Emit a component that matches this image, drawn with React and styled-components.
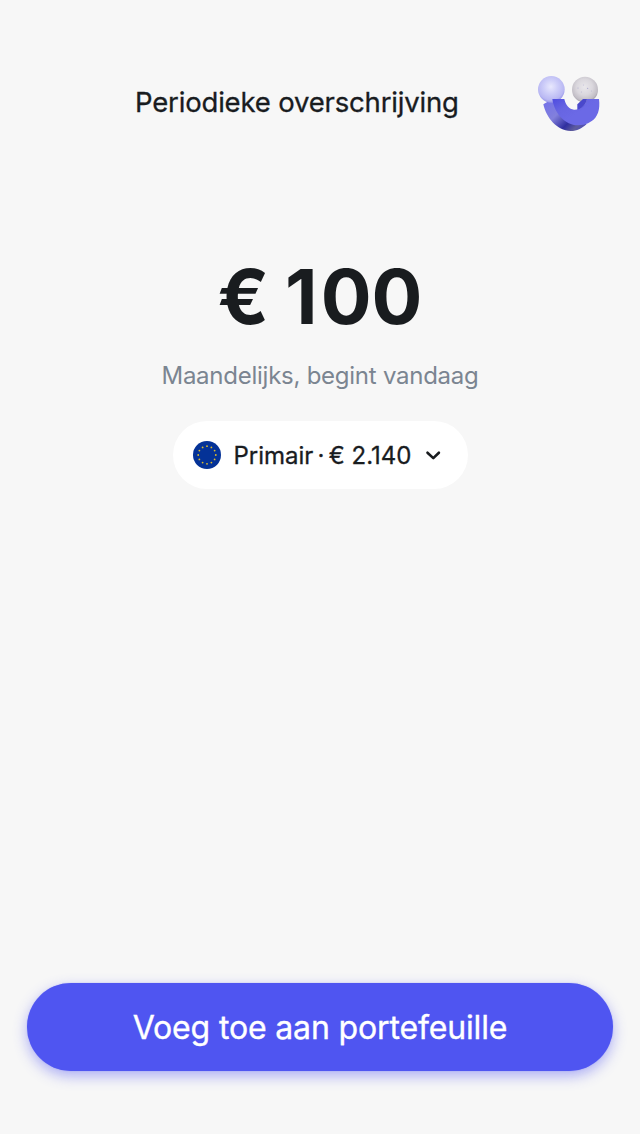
import React from "react";
import styled, { createGlobalStyle } from "styled-components";

const STARS = Array.from({ length: 12 }, (_, i) => {
  const angle = (i * Math.PI) / 6;
  return [14 + 8.8 * Math.sin(angle), 14 - 8.8 * Math.cos(angle)];
});

const Flag = () => (
  <svg width="28" height="28" viewBox="0 0 28 28">
    <circle cx="14" cy="14" r="14" fill="#043297" />
    {STARS.map(([x, y], i) => (
      <circle key={i} cx={x} cy={y} r="0.9" fill="#dcbc2c" />
    ))}
  </svg>
);

const Chevron = () => (
  <svg width="16" height="10" viewBox="0 0 16 10" fill="none">
    <path
      d="M2.5 2.7L8.3 8.1l5.6-5.4"
      stroke="#191c1f"
      strokeWidth="2.6"
      strokeLinecap="round"
      strokeLinejoin="round"
    />
  </svg>
);

const Smile = () => (
  <svg width="84" height="78" viewBox="0 0 252 234">
    <defs>
      <radialGradient id="ballLeft" cx="0.48" cy="0.4" r="0.62">
        <stop offset="0" stopColor="#e8e8fd" />
        <stop offset="0.4" stopColor="#cfcff9" />
        <stop offset="0.8" stopColor="#b9b8f3" />
        <stop offset="1" stopColor="#8c8ae6" />
      </radialGradient>
      <radialGradient id="ballRight" cx="0.48" cy="0.4" r="0.62">
        <stop offset="0" stopColor="#e9e7eb" />
        <stop offset="0.5" stopColor="#dad7dd" />
        <stop offset="0.82" stopColor="#c2bec6" />
        <stop offset="1" stopColor="#98949f" />
      </radialGradient>
      <linearGradient id="side" x1="60" y1="115" x2="150" y2="205" gradientUnits="userSpaceOnUse">
        <stop offset="0" stopColor="#7674e6" />
        <stop offset="0.35" stopColor="#8280dc" />
        <stop offset="0.68" stopColor="#302fa0" />
        <stop offset="0.88" stopColor="#5f5d9c" />
        <stop offset="1" stopColor="#5250b4" />
      </linearGradient>
      <linearGradient id="front" x1="85" y1="105" x2="120" y2="165" gradientUnits="userSpaceOnUse">
        <stop offset="0" stopColor="#5250e0" />
        <stop offset="0.5" stopColor="#6765e2" />
        <stop offset="1" stopColor="#6b69e6" />
      </linearGradient>
    </defs>
    <path d="M46 121L73 105L130 160L176 180C160 194 148 201 128 201C86 199 55 162 46 121Z" fill="url(#side)" />
    <circle cx="70" cy="76" r="40" fill="url(#ballLeft)" />
    <circle cx="171" cy="77" r="39" fill="url(#ballRight)" />
    <g fill="#a9a5cc">
      <circle cx="150" cy="72" r="1.5" />
      <circle cx="166" cy="63" r="1.3" />
      <circle cx="179" cy="73" r="1.8" />
      <circle cx="160" cy="84" r="1.4" />
      <circle cx="190" cy="81" r="1.4" />
    </g>
    <path
      d="M73 105H109C113 124 124 136 138 137C155 138 171 127 177 105H213C217 137 209 160 190 172C177 181 163 184 149 184C112 183 79 149 73 105Z"
      fill="url(#front)"
    />
    <path d="M148 137V121L165 105H177C172 124 162 134 148 137Z" fill="#4a48cc" />
  </svg>
);

const App = () => (
  <>
    <GlobalStyle />
    <Screen>
      <Header>
        <Title>Periodieke overschrijving</Title>
        <Logo>
          <Smile />
        </Logo>
      </Header>
      <Amount>
        € <LeadDigit>1</LeadDigit>00
      </Amount>
      <Schedule>Maandelijks, begint vandaag</Schedule>
      <Account>
        <Flag />
        <AccountName>
          Primair<Dot>·</Dot>€ 2.140
        </AccountName>
        <Chevron />
      </Account>
      <Submit>Voeg toe aan portefeuille</Submit>
    </Screen>
  </>
);

export default App;

const GlobalStyle = createGlobalStyle`
  * {
    box-sizing: border-box;
  }

  body {
    margin: 0;
    background: #ffffff;
    font-family: Inter, sans-serif;
    color: #191c1f;
  }

  svg {
    display: block;
    flex: none;
  }
`;

const Screen = styled.main`
  width: 640px;
  height: 1134px;
  display: flex;
  flex-direction: column;
  align-items: center;
  background: #f7f7f7;
`;

const Header = styled.header`
  width: 100%;
  height: 142px;
  padding: 64px 28px 0 135px;
  display: flex;
  justify-content: space-between;
`;

const Title = styled.h1`
  margin: 0;
  font-size: 27.5px;
  font-weight: 400;
  letter-spacing: -0.18px;
  line-height: 76px;
  white-space: nowrap;
  -webkit-text-stroke: 0.3px currentColor;
`;

const Logo = styled.div`
  width: 84px;
  height: 78px;
`;

const Amount = styled.div`
  margin-top: 109px;
  font-size: 75.5px;
  font-weight: 700;
  line-height: 92px;
`;

const LeadDigit = styled.span`
  margin: 0 3px 0 -2px;
`;

const Schedule = styled.p`
  margin: 18px 0 0;
  font-size: 24px;
  font-weight: 400;
  letter-spacing: -0.25px;
  line-height: 30px;
  color: #7b8591;
`;

const Account = styled.button`
  width: 295px;
  height: 68px;
  margin-top: 30px;
  padding: 0 0 0 20px;
  border: none;
  border-radius: 34px;
  display: flex;
  align-items: center;
  background: #ffffff;
  font-family: inherit;
  color: inherit;
  cursor: pointer;
`;

const AccountName = styled.span`
  width: 178px;
  margin: 0 13px;
  padding-top: 2px;
  font-size: 24px;
  font-weight: 400;
  line-height: 30px;
  text-align: left;
  white-space: nowrap;
  -webkit-text-stroke: 0.3px currentColor;
`;

const Dot = styled.span`
  margin: 0 4.5px 0 4px;
`;

const Submit = styled.button`
  width: 586px;
  height: 88px;
  margin-top: auto;
  margin-bottom: 63px;
  padding: 1px 0 0;
  border: none;
  border-radius: 44px;
  background: #4f55f1;
  box-shadow: 0 5px 14px rgba(79, 85, 241, 0.45), 0 0 1px rgba(79, 85, 241, 0.6);
  font-family: inherit;
  font-size: 32px;
  font-weight: 400;
  letter-spacing: -0.15px;
  color: #ffffff;
  cursor: pointer;
  -webkit-text-stroke: 0.35px currentColor;
`;
